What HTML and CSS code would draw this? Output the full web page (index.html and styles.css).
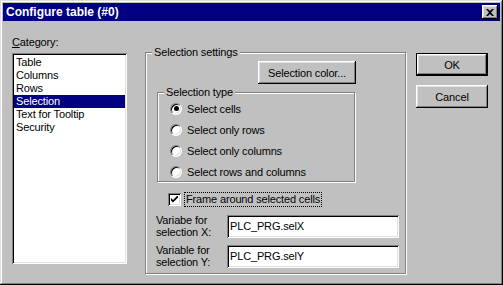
FILE: index.html
```html
<!DOCTYPE html>
<html lang="en">
<head>
  <meta charset="UTF-8">
  <title>Configure table (#0)</title>
  <link rel="stylesheet" href="styles.css">
</head>
<body>
  <div class="window">
    <!-- Title bar -->
    <div class="titlebar">
      <span class="title">Configure table (#0)</span>
      <span class="close-btn">
        <svg width="8" height="7" viewBox="0 0 8 7">
          <path d="M0 0 L2 0 L4 2 L6 0 L8 0 L5 3.5 L8 7 L6 7 L4 5 L2 7 L0 7 L3 3.5 Z" fill="#000"/>
        </svg>
      </span>
    </div>

    <div class="content">
      <!-- Category list -->
      <div class="category">
        <div class="cat-label"><u>C</u>ategory:</div>
        <ul class="listbox">
          <li>Table</li>
          <li>Columns</li>
          <li>Rows</li>
          <li class="selected">Selection</li>
          <li>Text for Tooltip</li>
          <li>Security</li>
        </ul>
      </div>

      <!-- Settings -->
      <div class="group settings">
        <span class="group-title">Selection settings</span>
        <div class="sel-col">
          <div class="btn color-btn">Selection color...</div>
          <div class="group type-group">
            <span class="group-title">Selection type</span>
            <div class="radio-row"><span class="radio checked"></span>Select cells</div>
            <div class="radio-row"><span class="radio"></span>Select only rows</div>
            <div class="radio-row"><span class="radio"></span>Select only columns</div>
            <div class="radio-row"><span class="radio"></span>Select rows and columns</div>
          </div>
        </div>
        <div class="check-row">
          <span class="checkbox">
            <svg width="7" height="7" viewBox="0 0 7 7">
              <path d="M0 2 L0 4.5 L2 6.5 L7 1.5 L7 -1 L2 4 Z" fill="#000"/>
            </svg>
          </span>
          <span class="focus">Frame around selected cells</span>
        </div>
        <div class="var-row">
          <div class="var-label">Variabe for<br>selection X:</div>
          <div class="textbox">PLC_PRG.selX</div>
        </div>
        <div class="var-row second">
          <div class="var-label">Variable for<br>selection Y:</div>
          <div class="textbox">PLC_PRG.selY</div>
        </div>
      </div>

      <!-- Dialog buttons -->
      <div class="buttons">
        <div class="btn default">OK</div>
        <div class="btn">Cancel</div>
      </div>
    </div>
  </div>
</body>
</html>
```

FILE: styles.css
```css
body {
  margin: 0;
  font-family: "Liberation Sans", Arial, sans-serif;
  font-size: 11px;
  letter-spacing: -0.15px;
  color: #000;
}

.window {
  width: 503px;
  height: 285px;
  box-sizing: border-box;
  padding: 3px;
  background-color: #c0c0c0;
  box-shadow: inset -1px -1px #000, inset 1px 1px #dfdfdf,
              inset -2px -2px #808080, inset 2px 2px #fff;
}

.titlebar {
  height: 18px;
  background-color: #000080;
  color: #fff;
  display: flex;
  align-items: center;
  justify-content: space-between;
  padding: 0 2px 0 3px;
}

.title {
  font-weight: bold;
  font-size: 12px;
  letter-spacing: 0;
}

.close-btn {
  width: 16px;
  height: 14px;
  background-color: #c0c0c0;
  display: flex;
  align-items: center;
  justify-content: center;
  box-shadow: inset -1px -1px #000, inset 1px 1px #fff,
              inset -2px -2px #808080, inset 2px 2px #dfdfdf;
}

.content {
  display: flex;
  padding: 15px 0 0 9px;
}

/* left list */
.category {
  width: 115px;
}

.cat-label {
  line-height: 13px;
}

.listbox {
  list-style: none;
  margin: 4px 0 0;
  padding: 3px 2px 0;
  height: 211px;
  box-sizing: border-box;
  background-color: #fff;
  box-shadow: inset 1px 1px #808080, inset -1px -1px #fff,
              inset 2px 2px #000, inset -2px -2px #dfdfdf;
}

.listbox li {
  line-height: 13px;
  padding-left: 2px;
}

.listbox li.selected {
  background-color: #000080;
  color: #fff;
}

/* group boxes */
.group {
  position: relative;
  box-sizing: border-box;
  border: 1px solid #808080;
  box-shadow: inset 1px 1px #fff, 1px 1px #fff;
}

.group-title {
  position: absolute;
  top: -7px;
  left: 6px;
  padding: 0 2px;
  line-height: 13px;
  background-color: #c0c0c0;
}

.settings {
  width: 261px;
  height: 222px;
  margin: 16px 0 0 18px;
  padding: 8px 0 0 11px;
}

.sel-col {
  width: 199px;
  display: flex;
  flex-direction: column;
  align-items: flex-end;
}

.btn {
  box-sizing: border-box;
  height: 23px;
  display: flex;
  align-items: center;
  justify-content: center;
  box-shadow: inset -1px -1px #000, inset 1px 1px #fff,
              inset -2px -2px #808080, inset 2px 2px #dfdfdf;
}

.color-btn {
  width: 98px;
}

.type-group {
  align-self: flex-start;
  width: 198px;
  height: 90px;
  margin-top: 8px;
  padding: 5px 0 0 12px;
}

.radio-row {
  height: 21px;
  display: flex;
  align-items: center;
  gap: 5px;
}

.radio {
  position: relative;
  width: 12px;
  height: 12px;
  box-sizing: border-box;
  border-radius: 50%;
  background-color: #fff;
  border: 1px solid;
  border-color: #808080 #fff #fff #808080;
  box-shadow: inset 1px 1px #000, inset -1px -1px #dfdfdf;
}

.radio.checked::after {
  content: "";
  position: absolute;
  left: 2.5px;
  top: 2.5px;
  width: 5px;
  height: 5px;
  border-radius: 50%;
  background-color: #000;
}

.check-row {
  display: flex;
  align-items: center;
  height: 16px;
  margin: 9px 0 0 11px;
  gap: 3px;
}

.checkbox {
  width: 13px;
  height: 13px;
  box-sizing: border-box;
  background-color: #fff;
  display: flex;
  align-items: center;
  justify-content: center;
  box-shadow: inset 1px 1px #808080, inset -1px -1px #fff,
              inset 2px 2px #000, inset -2px -2px #dfdfdf;
}

.focus {
  border: 1px dotted #000;
  padding: 0 1px;
  line-height: 13px;
}

.var-row {
  display: flex;
  align-items: center;
  margin: 7px 0 0 -1px;
}

.var-row.second {
  margin-top: 6px;
}

.var-label {
  width: 71px;
  line-height: 12px;
}

.textbox {
  width: 172px;
  height: 23px;
  box-sizing: border-box;
  padding: 0 3px;
  display: flex;
  align-items: center;
  background-color: #fff;
  box-shadow: inset 1px 1px #808080, inset -1px -1px #fff,
              inset 2px 2px #000, inset -2px -2px #dfdfdf;
}

/* right buttons */
.buttons {
  width: 72px;
  margin: 17px 0 0 10px;
  display: flex;
  flex-direction: column;
  gap: 9px;
}

.btn.default {
  border: 1px solid #000;
  height: 23px;
}
```
